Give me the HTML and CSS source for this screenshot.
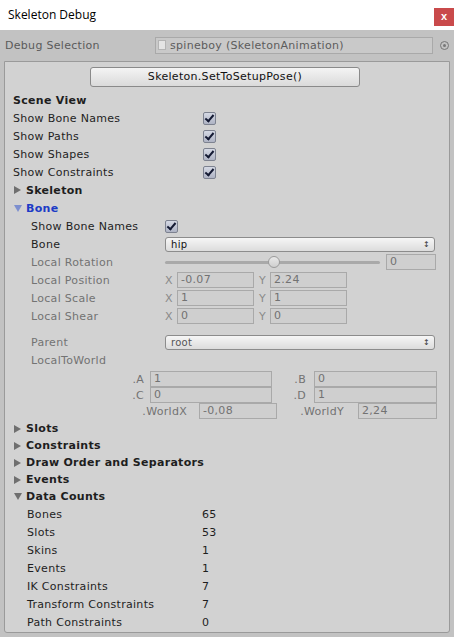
FILE: index.html
```html
<!DOCTYPE html>
<html lang="en">
<head>
    <meta charset="UTF-8">
    <title>Skeleton Debug</title>
    <link rel="stylesheet" href="styles.css">
</head>
<body>

    <div class="titlebar">
        <span class="title">Skeleton Debug</span>
        <span class="close">x</span>
    </div>

    <div class="selection">
        <span class="sel-label">Debug Selection</span>
        <span class="objfield"><span class="objicon"></span>spineboy (SkeletonAnimation)</span>
        <span class="picker"></span>
    </div>

    <div class="panel">
        <div class="btn-row">
            <div class="btn">Skeleton.SetToSetupPose()</div>
        </div>

        <div class="row head">Scene View</div>
        <div class="row"><span class="label scene">Show Bone Names</span><span class="check"></span></div>
        <div class="row"><span class="label scene">Show Paths</span><span class="check"></span></div>
        <div class="row"><span class="label scene">Show Shapes</span><span class="check"></span></div>
        <div class="row"><span class="label scene">Show Constraints</span><span class="check"></span></div>

        <div class="row fold"><span class="arrow right"></span>Skeleton</div>
        <div class="row fold active"><span class="arrow down"></span>Bone</div>

        <div class="indent">
            <div class="row"><span class="label">Show Bone Names</span><span class="check"></span></div>
            <div class="row"><span class="label">Bone</span><span class="dropdown">hip</span></div>
            <div class="row ctl off"><span class="label">Local Rotation</span>
                <span class="slider"><span class="knob"></span></span>
                <span class="field num">0</span>
            </div>
            <div class="row ctl off"><span class="label">Local Position</span>
                <span class="axis">X</span><span class="field vec">-0.07</span>
                <span class="axis y">Y</span><span class="field vec">2.24</span>
            </div>
            <div class="row ctl off"><span class="label">Local Scale</span>
                <span class="axis">X</span><span class="field vec">1</span>
                <span class="axis y">Y</span><span class="field vec">1</span>
            </div>
            <div class="row ctl off"><span class="label">Local Shear</span>
                <span class="axis">X</span><span class="field vec">0</span>
                <span class="axis y">Y</span><span class="field vec">0</span>
            </div>
            <div class="row off parent"><span class="label">Parent</span><span class="dropdown dim">root</span></div>
            <div class="row off"><span class="label">LocalToWorld</span></div>
        </div>

        <div class="matrix off">
            <div class="mrow">
                <span class="ml a">.A</span><span class="field fa">1</span>
                <span class="ml b">.B</span><span class="field fb">0</span>
            </div>
            <div class="mrow">
                <span class="ml a">.C</span><span class="field fa">0</span>
                <span class="ml b">.D</span><span class="field fb">1</span>
            </div>
            <div class="mrow">
                <span class="ml wx">.WorldX</span><span class="field fwx">-0,08</span>
                <span class="ml wy">.WorldY</span><span class="field fwy">2,24</span>
            </div>
        </div>

        <div class="row fold small"><span class="arrow right"></span>Slots</div>
        <div class="row fold small"><span class="arrow right"></span>Constraints</div>
        <div class="row fold small"><span class="arrow right"></span>Draw Order and Separators</div>
        <div class="row fold small"><span class="arrow right"></span>Events</div>
        <div class="row fold small"><span class="arrow down"></span>Data Counts</div>

        <div class="counts">
            <div class="row"><span class="label count">Bones</span><span>65</span></div>
            <div class="row"><span class="label count">Slots</span><span>53</span></div>
            <div class="row"><span class="label count">Skins</span><span>1</span></div>
            <div class="row"><span class="label count">Events</span><span>1</span></div>
            <div class="row"><span class="label count">IK Constraints</span><span>7</span></div>
            <div class="row"><span class="label count">Transform Constraints</span><span>7</span></div>
            <div class="row"><span class="label count">Path Constraints</span><span>0</span></div>
        </div>
    </div>

</body>
</html>
```

FILE: styles.css
```css
body {
    margin: 0;
    width: 454px;
    height: 637px;
    overflow: hidden;
    background-color: #c2c2c2;
    font-family: 'DejaVu Sans', Verdana, sans-serif;
    font-size: 11px;
    letter-spacing: 0.3px;
    color: #1e1e1e;
}

/* window title */
.titlebar {
    height: 30px;
    background-color: #ffffff;
    display: flex;
    align-items: flex-start;
    justify-content: space-between;
}

.title {
    font-family: 'Open Sans', 'Noto Sans', sans-serif;
    font-size: 12px;
    letter-spacing: 0;
    color: #000;
    padding: 6px 0 0 8px;
}

.close {
    margin-top: 8px;
    width: 20px;
    height: 18px;
    background-color: #c94a4b;
    color: #fff;
    font-family: 'Liberation Sans', Arial, sans-serif;
    font-size: 11px;
    font-weight: bold;
    letter-spacing: 0;
    text-align: center;
    line-height: 17px;
}

/* debug selection header */
.selection {
    height: 30px;
    display: flex;
    align-items: center;
    color: #5a5a5a;
}

.sel-label {
    width: 150px;
    padding-left: 5px;
}

.objfield {
    width: 274px;
    height: 15px;
    border: 1px solid #a9a9a9;
    background-color: #c9c9c9;
    color: #5c5c5c;
    display: flex;
    align-items: center;
    gap: 4px;
    padding-left: 2px;
}

.objicon {
    width: 6px;
    height: 8px;
    background-color: #e4e4e4;
    border: 1px solid #b4b4b4;
}

.picker {
    margin-left: 7px;
    width: 7px;
    height: 7px;
    border: 1px solid #777;
    border-radius: 50%;
    position: relative;
}

.picker::after {
    content: "";
    position: absolute;
    left: 2px;
    top: 2px;
    width: 3px;
    height: 3px;
    border-radius: 50%;
    background-color: #777;
}

/* main inspector panel */
.panel {
    margin: 1px 4px 0 4px;
    height: 570px;
    border: 1px solid #9a9a9a;
    border-radius: 0 0 3px 3px;
    background-color: #d2d2d2;
    padding: 0 0 0 8px;
}

.btn-row {
    padding: 5px 0 4px 77px;
}

.btn {
    width: 268px;
    height: 18px;
    border: 1px solid #8a8a8a;
    border-radius: 3px;
    background: linear-gradient(#f4f4f4, #dadada);
    text-align: center;
    line-height: 18px;
    color: #111;
}

.row {
    height: 18px;
    display: flex;
    align-items: center;
}

.head,
.fold {
    font-weight: bold;
}

.fold.small {
    height: 17px;
}

.fold.active {
    color: #1d3bc6;
}

.arrow {
    width: 0;
    height: 0;
    margin-left: 1px;
    margin-right: 5px;
}

.arrow.right {
    border-top: 4px solid transparent;
    border-bottom: 4px solid transparent;
    border-left: 7px solid #6f6f6f;
}

.arrow.down {
    border-left: 4px solid transparent;
    border-right: 4px solid transparent;
    border-top: 7px solid #6f6f6f;
    margin-right: 4px;
}

.active .arrow.down {
    border-top-color: #7d8fcf;
}

.label {
    width: 134px;
    flex-shrink: 0;
}

.label.scene {
    width: 190px;
}

.check {
    width: 11px;
    height: 11px;
    border: 1px solid #7d8290;
    border-radius: 2px;
    background: linear-gradient(#d5d9e4, #aeb3c4);
    position: relative;
}

.check::after {
    content: "";
    position: absolute;
    left: 3px;
    top: 0px;
    width: 3px;
    height: 7px;
    border-right: 2px solid #141a33;
    border-bottom: 2px solid #141a33;
    transform: rotate(40deg);
}

.indent {
    padding-left: 18px;
}

.dropdown {
    width: 263px;
    height: 13px;
    border: 1px solid #8c8c8c;
    border-radius: 3px;
    background: linear-gradient(#f6f6f6, #dcdcdc);
    padding-left: 5px;
    line-height: 13px;
    font-size: 10px;
    color: #111;
    position: relative;
}

.dropdown::after {
    content: "\2195";
    position: absolute;
    right: 4px;
    top: 0;
    font-size: 8px;
    color: #333;
}

.dropdown.dim {
    color: #555;
}

.off {
    color: #737373;
}

.parent {
    margin-top: 8px;
}

.slider {
    width: 215px;
    height: 3px;
    border-radius: 2px;
    background-color: #a9a9a9;
    position: relative;
    margin-right: 6px;
}

.knob {
    position: absolute;
    left: 103px;
    top: -5px;
    width: 10px;
    height: 10px;
    border-radius: 50%;
    border: 1px solid #9b9b9b;
    background: linear-gradient(#e8e8e8, #cfcfcf);
}

.field {
    height: 14px;
    border: 1px solid #a9a9a9;
    background-color: #cfcfcf;
    color: #727272;
    padding-left: 3px;
    line-height: 14px;
    box-sizing: content-box;
}

.field.num {
    width: 45px;
}

.axis {
    width: 12px;
    color: #8a8a8a;
}

.axis.y {
    margin-left: 5px;
    width: 11px;
}

.field.vec {
    width: 72px;
}

/* LocalToWorld matrix */
.matrix {
    padding-top: 2px;
    margin-bottom: 1px;
}

.mrow {
    height: 16px;
    display: flex;
    align-items: center;
}

.ml {
    text-align: right;
    flex-shrink: 0;
    color: #737373;
}

.ml.a {
    width: 131px;
    padding-right: 6px;
}

.ml.b {
    width: 34px;
    padding-right: 8px;
}

.ml.wx {
    width: 174px;
    padding-right: 12px;
}

.ml.wy {
    width: 67px;
    padding-right: 14px;
}

.field.fa {
    width: 117px;
}

.field.fb {
    width: 118px;
}

.field.fwx {
    width: 73px;
}

.field.fwy {
    width: 74px;
}

.counts {
    padding-left: 14px;
}

.label.count {
    width: 175px;
}
```
